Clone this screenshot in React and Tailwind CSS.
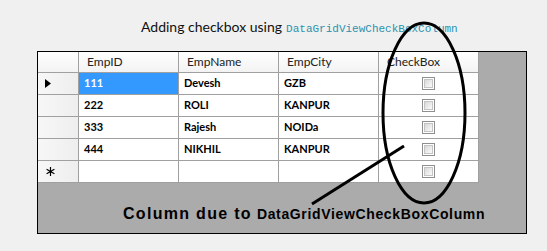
import React from "react";

const rows = [
  { id: "111", name: "Devesh", city: "GZB" },
  { id: "222", name: "ROLI", city: "KANPUR" },
  { id: "333", name: "Rajesh", city: "NOIDa" },
  { id: "444", name: "NIKHIL", city: "KANPUR" },
  { id: "", name: "", city: "", isNew: true },
];

function CheckBox() {
  return (
    <div className="w-[13px] h-[13px] border border-[#8e8f8f] bg-white p-px">
      <div className="w-full h-full border border-[#c4c4c4] bg-gradient-to-br from-[#d8d8d8] to-[#fbfbfb]" />
    </div>
  );
}

function HeaderCell({ children }) {
  return (
    <div className="w-[100px] h-full border-r border-[#a0a0a0] bg-gradient-to-b from-white to-[#f3f3f3] pl-[8px] flex items-center text-[12px] text-[#222]">
      {children}
    </div>
  );
}

function Cell({ children, selected }) {
  return (
    <div
      className={`w-[100px] h-full border-r border-[#a0a0a0] pl-[5px] flex items-center text-[11px] font-bold ${
        selected ? "bg-[#3399ff] text-white" : "bg-white text-black"
      }`}
    >
      {children}
    </div>
  );
}

export default function App() {
  return (
    <div className="relative w-[547px] h-[251px] bg-[#f0f0f0] overflow-hidden font-['Lato',sans-serif]">
      <div className="h-[51px] pl-[141px] pt-[16px] flex items-baseline">
        <span className="text-[14px] text-[#111]">Adding checkbox using</span>
        <span className="ml-[4px] font-['Liberation_Mono',monospace] text-[11px] text-[#2b91af]">
          DataGridViewCheckBoxColumn
        </span>
      </div>

      <div className="ml-[37px] w-[490px] h-[183px] border border-black bg-[#ababab] flex flex-col">
        <div className="w-[441px]">
          <div className="flex h-[21px] border-b border-[#a0a0a0]">
            <div className="w-[41px] h-full border-r border-[#a0a0a0] bg-gradient-to-b from-white to-[#f3f3f3]" />
            <HeaderCell>EmpID</HeaderCell>
            <HeaderCell>EmpName</HeaderCell>
            <HeaderCell>EmpCity</HeaderCell>
            <HeaderCell>CheckBox</HeaderCell>
          </div>
          {rows.map((r, i) => (
            <div key={i} className="flex h-[22px] border-b border-[#a0a0a0]">
              <div className="w-[41px] h-full border-r border-[#a0a0a0] bg-gradient-to-r from-[#f7f7f7] to-[#eeeeee] pl-[7px] flex items-center">
                {i === 0 && (
                  <svg width="6" height="9" viewBox="0 0 6 9">
                    <path d="M0 0 L6 4.5 L0 9 Z" fill="#000" />
                  </svg>
                )}
                {r.isNew && (
                  <svg width="9" height="9" viewBox="0 0 9 9" className="ml-px">
                    <path d="M4.5 0 V9 M0.6 2.25 L8.4 6.75 M0.6 6.75 L8.4 2.25" stroke="#000" strokeWidth="1.2" />
                  </svg>
                )}
              </div>
              <Cell selected={i === 0}>{r.id}</Cell>
              <Cell>{r.name}</Cell>
              <Cell>{r.city}</Cell>
              <div className="w-[100px] h-full border-r border-[#a0a0a0] bg-white flex items-center justify-center">
                <CheckBox />
              </div>
            </div>
          ))}
        </div>
        <div className="pl-[85px] pt-[19px] flex items-baseline font-['Liberation_Sans',Arial,sans-serif] font-bold text-black">
          <span className="text-[16px] tracking-[1.3px]">Column due to</span>
          <span className="ml-[5px] text-[14px] tracking-[0.65px]">DataGridViewCheckBoxColumn</span>
        </div>
      </div>

      <svg className="absolute left-0 top-0 pointer-events-none" width="547" height="251">
        <ellipse cx="424" cy="113" rx="41" ry="90" fill="none" stroke="#000" strokeWidth="3" />
        <line x1="404" y1="146" x2="312" y2="204" stroke="#000" strokeWidth="3" />
      </svg>
    </div>
  );
}
